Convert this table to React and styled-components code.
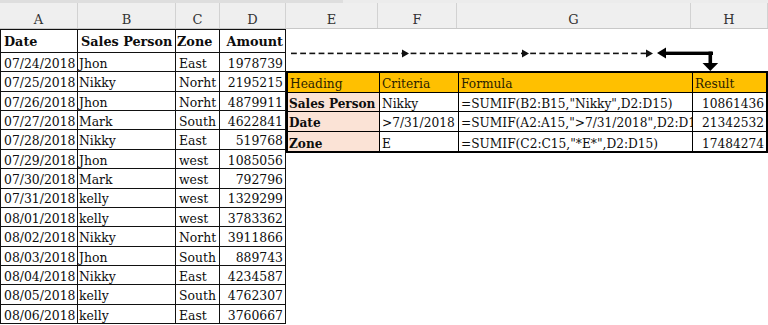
import React from "react";
import styled, { createGlobalStyle } from "styled-components";

const GlobalStyle = createGlobalStyle`
    html, body {
        margin: 0;
        padding: 0;
        background: #fff;
    }
    body {
        font-family: "DejaVu Serif", "Liberation Serif", serif;
        color: #111;
    }
`;

const Page = styled.div`
    width: 768px;
    height: 325px;
    overflow: hidden;
    background: #fff;
`;

const Ribbon = styled.div`
    height: 3px;
    background: linear-gradient(to right, #dedede 0 343px, #ececec 343px);
`;

const Sheets = styled.div`
    display: flex;
    align-items: flex-start;
`;

const LeftSheet = styled.div`
    width: 286px;
    flex: none;
`;

const RightSheet = styled.div`
    flex: 1;
    min-width: 0;
`;

const HeaderBar = styled.div`
    display: grid;
    grid-template-columns: ${(p) => p.$cols};
    height: 26px;
    background: #efefef;
    border-bottom: 1px solid #c8c8c8;
    box-sizing: border-box;
`;

const ColLetter = styled.div`
    display: flex;
    align-items: center;
    justify-content: center;
    padding-top: 8px;
    font-size: 13px;
    color: #333;
    border-right: 1px solid #d2d2d2;
    box-sizing: border-box;
`;

const LEFT_COLS = "78px 98px 44px 66px";

const DataTable = styled.div`
    border-left: 1px solid #111;
    border-top: 1px solid #111;
    width: 286px;
    box-sizing: border-box;
`;

const Row = styled.div`
    display: grid;
    grid-template-columns: 77px 98px 44px 66px;
    height: ${(p) => (p.$head ? "23px" : "19.36px")};
    box-sizing: border-box;
`;

const Cell = styled.div`
    border-right: 1px solid #111;
    border-bottom: 1px solid #111;
    display: flex;
    align-items: flex-end;
    justify-content: ${(p) => (p.$right ? "flex-end" : "flex-start")};
    padding: 0 ${(p) => (p.$right ? "2px" : "0")} ${(p) => (p.$bold ? "3px" : "1px")} ${(p) => (p.$right ? "0" : p.$pad || "2px")};
    font-size: ${(p) => (p.$bold ? "12.8px" : "12.4px")};
    font-weight: ${(p) => (p.$bold ? 700 : 400)};
    color: #0d0d0d;
    white-space: nowrap;
    overflow: hidden;
    line-height: 1;
    box-sizing: border-box;
`;

const ArrowArea = styled.div`
    height: 42px;
`;

const ArrowSvg = styled.svg`
    display: block;
`;

const SummaryTable = styled.div`
    border: 2px solid #000;
    box-sizing: border-box;
    width: 482px;
`;

const SumRow = styled.div`
    display: grid;
    grid-template-columns: 92px 79px 234px 1fr;
    height: ${(p) => p.$h}px;
    background: ${(p) => (p.$head ? "#ffc000" : "transparent")};
    border-bottom: ${(p) => (p.$last ? "none" : "1.5px solid #000")};
    box-sizing: border-box;
`;

const SumCell = styled.div`
    display: flex;
    align-items: flex-end;
    justify-content: ${(p) => (p.$right ? "flex-end" : "flex-start")};
    padding: 0 ${(p) => (p.$right ? "2px" : "0")} 1px ${(p) => (p.$bold ? "1px" : "2px")};
    border-right: ${(p) => (p.$end ? "none" : "1.5px solid #000")};
    background: ${(p) => p.$bg || "transparent"};
    font-size: ${(p) => (p.$bold ? "12.1px" : "12.2px")};
    font-weight: ${(p) => (p.$bold ? 700 : 400)};
    color: ${(p) => (p.$muted ? "#2b2300" : "#0d0d0d")};
    white-space: nowrap;
    overflow: hidden;
    line-height: 1;
    box-sizing: border-box;
`;

const sales = [
    ["07/24/2018", "Jhon", "East", "1978739"],
    ["07/25/2018", "Nikky", "Norht", "2195215"],
    ["07/26/2018", "Jhon", "Norht", "4879911"],
    ["07/27/2018", "Mark", "South", "4622841"],
    ["07/28/2018", "Nikky", "East", "519768"],
    ["07/29/2018", "Jhon", "west", "1085056"],
    ["07/30/2018", "Mark", "west", "792796"],
    ["07/31/2018", "kelly", "west", "1329299"],
    ["08/01/2018", "kelly", "west", "3783362"],
    ["08/02/2018", "Nikky", "Norht", "3911866"],
    ["08/03/2018", "Jhon", "South", "889743"],
    ["08/04/2018", "Nikky", "East", "4234587"],
    ["08/05/2018", "kelly", "South", "4762307"],
    ["08/06/2018", "kelly", "East", "3760667"],
];

const summary = [
    ["Sales Person", "Nikky", '=SUMIF(B2:B15,"Nikky",D2:D15)', "10861436"],
    ["Date", ">7/31/2018", '=SUMIF(A2:A15,">7/31/2018",D2:D15)', "21342532"],
    ["Zone", "E", '=SUMIF(C2:C15,"*E*",D2:D15)', "17484274"],
];

const Arrows = () => {
    const dashes = [];
    for (let x = 5; x < 362; x += 9.2) {
        dashes.push(<rect key={x} x={x} y={23.6} width={5.8} height={1.6} fill="#111" />);
    }
    return (
        <ArrowSvg width="482" height="42" viewBox="0 0 482 42">
            {dashes}
            {[123, 243, 367].map((x) => (
                <polygon key={x} points={`${x - 7},20.4 ${x},24.4 ${x - 7},28.4`} fill="#111" />
            ))}
            <polygon points="371,24 380,18.5 380,29.5" fill="#000" />
            <rect x="379" y="22.6" width="48" height="3.4" fill="#000" />
            <rect x="422.5" y="22.6" width="3.6" height="12" fill="#000" />
            <polygon points="416.5,34 432.2,34 424.3,42" fill="#000" />
        </ArrowSvg>
    );
};

export default function App() {
    return (
        <Page>
            <GlobalStyle />
            <Ribbon />
            <Sheets>
                <LeftSheet>
                    <HeaderBar $cols={LEFT_COLS}>
                        <ColLetter>A</ColLetter>
                        <ColLetter>B</ColLetter>
                        <ColLetter>C</ColLetter>
                        <ColLetter>D</ColLetter>
                    </HeaderBar>
                    <DataTable>
                        <Row $head>
                            <Cell $bold $pad="3px">Date</Cell>
                            <Cell $bold $pad="3px">Sales Person</Cell>
                            <Cell $bold $pad="1px">Zone</Cell>
                            <Cell $bold $right>Amount</Cell>
                        </Row>
                        {sales.map(([date, who, zone, amt]) => (
                            <Row key={date}>
                                <Cell $pad="3px">{date}</Cell>
                                <Cell $pad="1px">{who}</Cell>
                                <Cell $pad="3px">{zone}</Cell>
                                <Cell $right>{amt}</Cell>
                            </Row>
                        ))}
                    </DataTable>
                </LeftSheet>
                <RightSheet>
                    <HeaderBar $cols="92px 79px 234px 1fr">
                        <ColLetter>E</ColLetter>
                        <ColLetter>F</ColLetter>
                        <ColLetter>G</ColLetter>
                        <ColLetter>H</ColLetter>
                    </HeaderBar>
                    <ArrowArea>
                        <Arrows />
                    </ArrowArea>
                    <SummaryTable>
                        <SumRow $head $h={19.5}>
                            <SumCell $muted>Heading</SumCell>
                            <SumCell $muted>Criteria</SumCell>
                            <SumCell $muted>Formula</SumCell>
                            <SumCell $muted $end>Result</SumCell>
                        </SumRow>
                        {summary.map(([head, crit, formula, result], i) => (
                            <SumRow key={head} $h={19.5} $last={i === summary.length - 1}>
                                <SumCell $bold $bg="#fbe3d6">{head}</SumCell>
                                <SumCell>{crit}</SumCell>
                                <SumCell>{formula}</SumCell>
                                <SumCell $right $end>{result}</SumCell>
                            </SumRow>
                        ))}
                    </SummaryTable>
                </RightSheet>
            </Sheets>
        </Page>
    );
}
